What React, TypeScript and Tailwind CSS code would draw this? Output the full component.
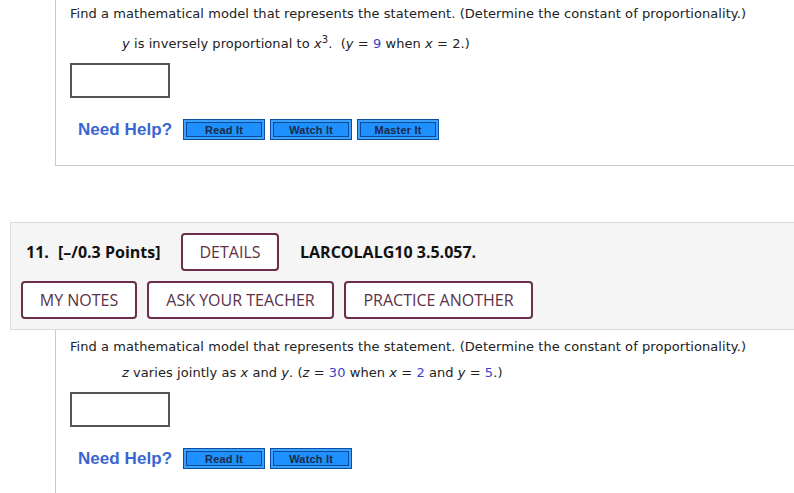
import React from "react";

const verdana = { fontFamily: "'DejaVu Sans', Verdana, sans-serif" };

function HelpButton({ label }: { label: string }) {
  return (
    <div className="w-[82px] h-[21px] border border-[#0d4f9e] bg-[#39a2ff] p-[2px]">
      <div
        className="h-full border border-[#0b4a96] bg-[#1e90ff] flex items-center justify-center text-[11px] font-bold text-[#1d2a42] tracking-[0.2px]"
        style={{ fontFamily: "'Liberation Sans', Arial, sans-serif" }}
      >
        {label}
      </div>
    </div>
  );
}

function NeedHelp({ buttons }: { buttons: string[] }) {
  return (
    <div className="flex items-center pl-[8px]">
      <span
        className="text-[17px] font-bold text-[#3a66d1] mr-[11px]"
        style={{ fontFamily: "'Liberation Sans', Arial, sans-serif" }}
      >
        Need Help?
      </span>
      <div className="flex gap-[5px]">
        {buttons.map((b) => (
          <HelpButton key={b} label={b} />
        ))}
      </div>
    </div>
  );
}

function AnswerBox() {
  return <div className="w-[100px] h-[35px] border-2 border-[#555555] bg-white" />;
}

function OutlineBtn({ label, w }: { label: string; w: string }) {
  return (
    <div
      className={`${w} h-[38px] flex items-center justify-center rounded-[4px] border-2 border-[#6b2d4a] bg-white text-[16px] font-medium text-[#5a3148]`}
    >
      {label}
    </div>
  );
}

function Blue({ children }: { children: React.ReactNode }) {
  return <span className="text-[#4040c8]">{children}</span>;
}

export default function App() {
  return (
    <div className="w-[794px] h-[493px] overflow-hidden bg-white text-[#222]">
      {/* previous question body */}
      <div
        className="ml-[55px] h-[166px] border-l border-b border-[#c9c9c9] pt-[6px] pl-[14px] text-[13px] leading-[16px] tracking-[0.06px]"
        style={verdana}
      >
        <p>
          Find a mathematical model that represents the statement. (Determine the constant of proportionality.)
        </p>
        <p className="mt-[14px] pl-[52px]">
          <i>y</i> is inversely proportional to <i>x</i>
          <sup className="text-[10px]">3</sup>. &nbsp;(<i>y</i> = <Blue>9</Blue> when <i>x</i> = 2.)
        </p>
        <div className="mt-[11px]">
          <AnswerBox />
        </div>
        <div className="mt-[21px]">
          <NeedHelp buttons={["Read It", "Watch It", "Master It"]} />
        </div>
      </div>

      {/* question 11 header */}
      <div
        className="ml-[10px] mt-[56px] h-[108px] border border-r-0 border-[#dcdcdc] bg-[#f5f5f5] pt-[10px] pl-[10px]"
        style={{ fontFamily: "'Open Sans', sans-serif" }}
      >
        <div className="flex items-center h-[38px] pl-[5px]">
          <span className="font-bold text-[16px] text-[#111] w-[32px]">11.</span>
          <span className="font-bold text-[16px] text-[#111] w-[123px]">[–/0.3 Points]</span>
          <OutlineBtn label="DETAILS" w="w-[98px]" />
          <span className="font-bold text-[16px] text-[#111] ml-[21px]">LARCOLALG10 3.5.057.</span>
        </div>
        <div className="flex gap-[10px] mt-[10px]">
          <OutlineBtn label="MY NOTES" w="w-[116px]" />
          <OutlineBtn label="ASK YOUR TEACHER" w="w-[187px]" />
          <OutlineBtn label="PRACTICE ANOTHER" w="w-[189px]" />
        </div>
      </div>

      {/* question 11 body */}
      <div
        className="ml-[55px] h-[200px] border-l border-[#c9c9c9] pt-[9px] pl-[14px] text-[13px] leading-[16px] tracking-[0.06px]"
        style={verdana}
      >
        <p>
          Find a mathematical model that represents the statement. (Determine the constant of proportionality.)
        </p>
        <p className="mt-[10px] pl-[52px]">
          <i>z</i> varies jointly as <i>x</i> and <i>y</i>. (<i>z</i> = <Blue>30</Blue> when <i>x</i> ={" "}
          <Blue>2</Blue> and <i>y</i> = <Blue>5</Blue>.)
        </p>
        <div className="mt-[11px]">
          <AnswerBox />
        </div>
        <div className="mt-[21px]">
          <NeedHelp buttons={["Read It", "Watch It"]} />
        </div>
      </div>
    </div>
  );
}
